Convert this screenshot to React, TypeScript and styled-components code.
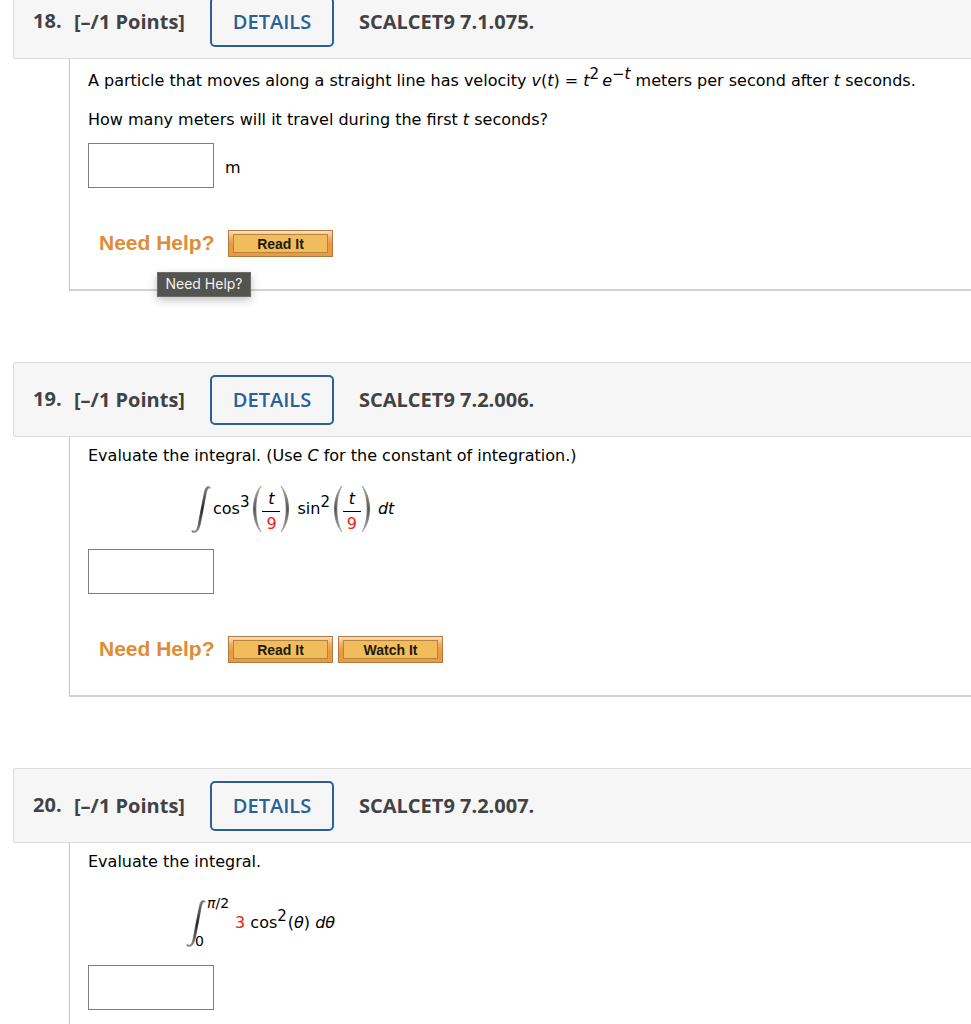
import React from 'react';
import styled, { createGlobalStyle } from 'styled-components';

const GlobalStyle = createGlobalStyle`
  *, *::before, *::after { box-sizing: border-box; }
  body { margin: 0; background: #fff; color: #000; }
`;

const Page = styled.main`
  height: 100vh;
  overflow: hidden;
  padding-left: 13px;
  font-family: 'DejaVu Sans', Verdana, sans-serif;
  font-size: 16px;
  line-height: 22px;
`;

/* The list is scrolled so that the first header is partly out of view. */
const QuestionList = styled.div`
  display: flex;
  flex-direction: column;
  gap: 71px;
  margin-top: -16px;
`;

const Header = styled.header`
  display: flex;
  align-items: center;
  height: 75px;
  padding-left: 19px;
  background: #f6f6f6;
  border: 1px solid #dcdcdc;
  border-right: 0;
  border-radius: 3px 0 0 3px;
  color: #424242;
  font-family: 'Open Sans', sans-serif;
  font-size: 20px;
  font-weight: 700;
  line-height: 28px;
`;

const QuestionNumber = styled.span`
  width: 41px;
  padding-bottom: 2px;
`;

const Points = styled.span`
  width: 136px;
`;

const DetailsButton = styled.button`
  width: 124px;
  height: 50px;
  margin-right: 25px;
  padding: 0;
  background: transparent;
  border: 2px solid #28619a;
  border-radius: 5px;
  color: #28619a;
  font: 600 20px/28px 'Open Sans', sans-serif;
`;

const Code = styled.h2`
  margin: 0;
  font-size: 20px;
`;

const Body = styled.div`
  min-height: 232px;
  margin-left: 56px;
  padding: 8px 0 32px 18px;
  border-left: 1px solid #c8c8c8;
  border-bottom: 2px solid #d2d2d2;
`;

const Prompt = styled.p<{ $tall?: boolean }>`
  margin: 0;
  line-height: ${(p) => (p.$tall ? 28 : 22)}px;
  white-space: nowrap;

  & + & { margin: 14px 0 12px; }
`;

const Sup = styled.sup<{ $gap?: number }>`
  position: relative;
  bottom: 7px;
  margin-right: ${(p) => p.$gap ?? 0}px;
  font-size: 15px;
  line-height: 0;
  vertical-align: baseline;
`;

const AnswerRow = styled.label`
  display: flex;
  align-items: center;
  gap: 11px;
`;

const Answer = styled.input`
  width: 126px;
  height: 45px;
  padding: 0 8px;
  background: #fff;
  border: 1px solid #7c7c7c;
  font: inherit;
`;

const Unit = styled.span`
  padding-top: 4px;
`;

const Formula = styled.div<{ $limits?: boolean }>`
  display: flex;
  align-items: center;
  height: 52px;
  margin: ${(p) => (p.$limits ? '24px 0 16px 98px' : '16px 0 14px 103px')};
  white-space: pre;
`;

const Term = styled.span`
  margin-left: 2px;
`;

const Red = styled.span`
  color: #ee2211;
`;

const Fraction = styled.span`
  display: flex;
  flex-direction: column;
  align-items: center;
  width: 18px;
  padding-top: 4px;
  line-height: 24px;

  & > :first-child {
    align-self: stretch;
    text-align: center;
    border-bottom: 1px solid #000;
  }
`;

const Group = styled.span`
  display: flex;
  align-items: center;
  margin: 0 5px 0 3px;
`;

const Limits = styled.span`
  display: flex;
  flex-direction: column;
  justify-content: space-between;
  align-self: stretch;
  margin: -1px 4px 1px -11px;
  font-size: 14px;
  line-height: 14px;
`;

const UpperLimit = styled.span`
  padding-left: 12px;
`;

const Help = styled.div`
  position: relative;
  display: flex;
  align-items: center;
  gap: 5px;
  height: 27px;
  margin-top: 42px;
  padding-left: 11px;
`;

const HelpLabel = styled.span`
  width: 124px;
  padding-bottom: 2px;
  color: #e08c36;
  font: 700 21px/25px 'Liberation Sans', Arial, sans-serif;
`;

const HelpButton = styled.button`
  display: flex;
  width: 105px;
  height: 27px;
  padding: 3px 4px;
  background: linear-gradient(#fae0c5, #f0ad6a 30%, #e99a43 55%, #e99a43);
  border: 1px solid #b27a3c;
  color: #1f1a08;
  font: 700 14px/18px 'Liberation Sans', Arial, sans-serif;
`;

const HelpFace = styled.span`
  flex: 1;
  height: 19px;
  background: #f1bd5c;
  border: 1px solid #b5853f;
`;

const Tooltip = styled.span`
  position: absolute;
  top: 42px;
  left: 69px;
  width: 94px;
  height: 25px;
  background: #535350;
  border: 1px solid #6b6b69;
  box-shadow: 0 3px 8px rgba(0, 0, 0, 0.25);
  color: #f2f2f2;
  font: 14px/22px Inter, sans-serif;
  text-align: center;
`;

function Integral() {
  return (
    <svg width="20" height="48" viewBox="0 0 20 48" fill="none" aria-label="integral">
      <defs>
        <linearGradient id="stem" x1="0" y1="0" x2="0" y2="48" gradientUnits="userSpaceOnUse">
          <stop offset="0" stopColor="#888" />
          <stop offset="0.5" stopColor="#222" />
          <stop offset="1" stopColor="#888" />
        </linearGradient>
      </defs>
      <path
        d="M19.500 3C16.500 0 14.500 2 13.500 7L7.500 38C6.500 44 5 48 1 45.500L1 47C6 48.500 8 45 9.500 38L15 9C16 4 17.500 2 19.500 3Z"
        fill="url(#stem)"
        stroke="url(#stem)"
        strokeWidth="0.8"
      />
    </svg>
  );
}

function Paren({ close = false }: { close?: boolean }) {
  return (
    <svg width="10" height="48" viewBox="0 0 10 48" fill="none" aria-hidden="true">
      <defs>
        <linearGradient id="bow" x1="0" y1="0" x2="0" y2="48" gradientUnits="userSpaceOnUse">
          <stop offset="0" stopColor="#aaa" />
          <stop offset="0.5" stopColor="#555" />
          <stop offset="1" stopColor="#aaa" />
        </linearGradient>
      </defs>
      <path
        d={close ? 'M1 1C11 12 11 36 1 47C8 35 8 13 1 1Z' : 'M9 1C-1 12 -1 36 9 47C2 35 2 13 9 1Z'}
        fill="url(#bow)"
        stroke="url(#bow)"
        strokeWidth="0.8"
      />
    </svg>
  );
}

function TOverNine() {
  return (
    <Group>
      <Paren />
      <Fraction>
        <i>t</i>
        <Red>9</Red>
      </Fraction>
      <Paren close />
    </Group>
  );
}

type QuestionProps = { number: number; code: string; children: React.ReactNode };

function Question({ number, code, children }: QuestionProps) {
  return (
    <section>
      <Header>
        <QuestionNumber>{number}.</QuestionNumber>
        <Points>[–/1 Points]</Points>
        <DetailsButton type="button">DETAILS</DetailsButton>
        <Code>{code}</Code>
      </Header>
      <Body>{children}</Body>
    </section>
  );
}

function NeedHelp({ actions, tooltip }: { actions: string[]; tooltip?: boolean }) {
  return (
    <Help>
      <HelpLabel>Need Help?</HelpLabel>
      {actions.map((action) => (
        <HelpButton key={action} type="button">
          <HelpFace>{action}</HelpFace>
        </HelpButton>
      ))}
      {tooltip && <Tooltip role="tooltip">Need Help?</Tooltip>}
    </Help>
  );
}

export default function App() {
  return (
    <>
      <GlobalStyle />
      <Page>
        <QuestionList>
          <Question number={18} code="SCALCET9 7.1.075.">
            <Prompt $tall>
              A particle that moves along a straight line has velocity <i>v</i>(<i>t</i>) = <i>t</i>
              <Sup $gap={3}>2</Sup>
              <i>e</i>
              <Sup>
                −<i>t</i>
              </Sup>{' '}
              meters per second after <i>t</i> seconds.
            </Prompt>
            <Prompt>
              How many meters will it travel during the first <i>t</i> seconds?
            </Prompt>
            <AnswerRow>
              <Answer type="text" aria-label="Distance in meters" />
              <Unit>m</Unit>
            </AnswerRow>
            <NeedHelp actions={['Read It']} tooltip />
          </Question>

          <Question number={19} code="SCALCET9 7.2.006.">
            <Prompt>
              Evaluate the integral. (Use <i>C</i> for the constant of integration.)
            </Prompt>
            <Formula>
              <Integral />
              <Term>
                cos<Sup>3</Sup>
              </Term>
              <TOverNine />
              <Term>
                sin<Sup>2</Sup>
              </Term>
              <TOverNine />
              <Term>
                <i>dt</i>
              </Term>
            </Formula>
            <AnswerRow>
              <Answer type="text" aria-label="Answer to question 19" />
            </AnswerRow>
            <NeedHelp actions={['Read It', 'Watch It']} />
          </Question>

          <Question number={20} code="SCALCET9 7.2.007.">
            <Prompt>Evaluate the integral.</Prompt>
            <Formula $limits>
              <Integral />
              <Limits>
                <UpperLimit>
                  <i>π</i>/2
                </UpperLimit>
                <span>0</span>
              </Limits>
              <Term>
                <Red>3</Red> cos<Sup $gap={1}>2</Sup>(<i>θ</i>) <i>dθ</i>
              </Term>
            </Formula>
            <AnswerRow>
              <Answer type="text" aria-label="Answer to question 20" />
            </AnswerRow>
          </Question>
        </QuestionList>
      </Page>
    </>
  );
}
